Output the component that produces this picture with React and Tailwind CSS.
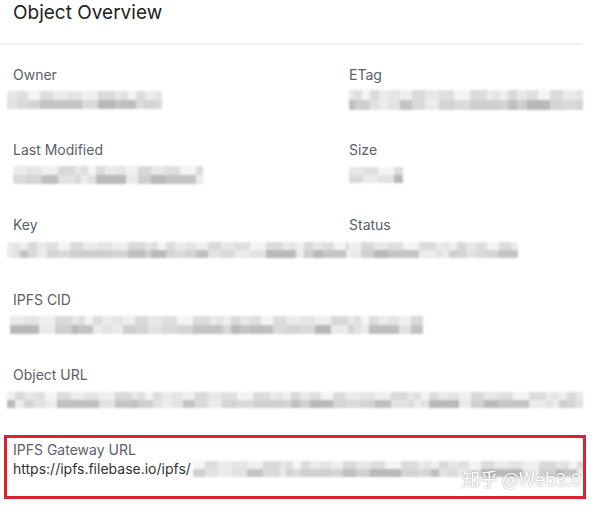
import React from "react";

const shades = ["#d4d4d4", "#c4c4c4", "#e2e2e2", "#b9b9b9", "#dadada", "#cfcfcf", "#ebebeb", "#bfbfbf"];

// pixelated, blurred placeholder for a hidden value
function Mosaic({ width, seed = 1, height = 18, className = "" }) {
  const cells = [];
  let x = 0;
  let s = seed;
  while (x < width) {
    s = (s * 9301 + 49297) % 233280;
    const w = Math.min(6 + (s % 12), width - x);
    const top = shades[s % shades.length];
    const bottom = shades[(s >> 3) % shades.length];
    cells.push({ w, top, bottom });
    x += w;
  }
  return (
    <div className={`flex blur-[1px] ${className}`} style={{ width, height }}>
      {cells.map((c, i) => (
        <div key={i} className="flex flex-col" style={{ width: c.w }}>
          <div className="flex-1" style={{ background: c.top, opacity: 0.55 }} />
          <div className="flex-1" style={{ background: c.bottom }} />
        </div>
      ))}
    </div>
  );
}

function Field({ label, children }) {
  return (
    <div className="flex flex-col">
      <p className="text-[14px] leading-[20px] text-[#5c6066]">{label}</p>
      <div className="mt-[5px] h-[20px] flex items-center">{children}</div>
    </div>
  );
}

export default function App() {
  return (
    <div className="w-[600px] h-[507px] bg-white overflow-hidden font-['Inter','Liberation_Sans',sans-serif]">
      <h1 className="pl-[13px] h-[28px] text-[19px] leading-[26px] text-[#222]">Object Overview</h1>
      <div className="mt-[15px] h-[2px] w-[583px] bg-[#f1f1f1]" />

      <div className="mt-[20px] pl-[13px] grid grid-cols-[336px_1fr] gap-y-[30px]">
        <Field label="Owner">
          <Mosaic width={155} seed={3} className="-ml-[6px]" />
        </Field>
        <Field label="ETag">
          <Mosaic width={234} seed={11} height={20} />
        </Field>

        <Field label="Last Modified">
          <Mosaic width={190} seed={7} />
        </Field>
        <Field label="Size">
          <Mosaic width={54} seed={19} height={16} />
        </Field>

        <Field label="Key">
          <Mosaic width={342} seed={23} height={16} className="-ml-[6px]" />
        </Field>
        <Field label="Status">
          <Mosaic width={169} seed={29} height={16} />
        </Field>

        <div className="col-span-2">
          <Field label="IPFS CID">
            <Mosaic width={413} seed={31} className="-ml-[3px]" />
          </Field>
        </div>

        <div className="col-span-2">
          <Field label="Object URL">
            <Mosaic width={576} seed={37} height={16} className="-ml-[6px]" />
          </Field>
        </div>
      </div>

      <div className="relative mt-[25px] ml-[4px] w-[582px] h-[64px] border-[3px] border-[#d9232e] pl-[6px] pt-[2px] overflow-hidden">
        <p className="text-[14px] leading-[20px] text-[#5c6066]">IPFS Gateway URL</p>
        <div className="flex items-center h-[20px] mt-[-1px]">
          <span className="text-[14px] leading-[20px] text-[#333] whitespace-nowrap">https://ipfs.filebase.io/ipfs/</span>
          <Mosaic width={395} seed={41} height={16} className="ml-[2px]" />
        </div>
        <span className="absolute left-[455px] top-[28px] whitespace-nowrap text-[18px] leading-[24px] text-white [text-shadow:0_0_2px_#8a8a8a] font-['Noto_Sans_CJK_SC','Liberation_Sans',sans-serif]">
          知乎 @Web3.0
        </span>
      </div>
    </div>
  );
}
